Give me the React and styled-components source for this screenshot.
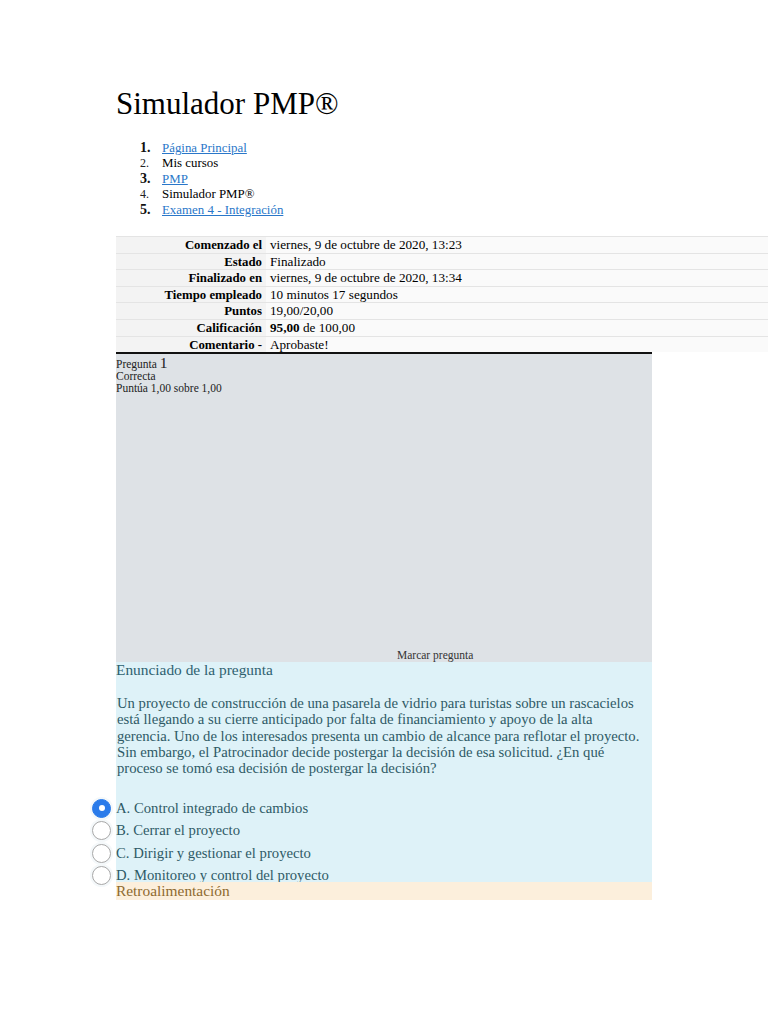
import React from "react"
import styled, { createGlobalStyle } from "styled-components"

const GlobalStyle = createGlobalStyle`
  body {
    margin: 0;
    background: #ffffff;
    font-family: "Liberation Serif", "Times New Roman", serif;
    color: #000;
  }
`;

const Page = styled.div`
  padding: 84px 0 120px 116px;
`;
const Title = styled.h1`
  margin: 0;
  font-size: 31px;
  font-weight: normal;
  line-height: 40px;
`;
const Crumbs = styled.ol`
  list-style: none;
  margin: 16px 0 0 0;
  padding: 0 0 0 24px;
`;
const Crumb = styled.li`
  display: flex;
  align-items: baseline;
  height: 15.6px;
  font-size: 12.9px;
  line-height: 15.6px;
`;
const Num = styled.span`
  width: 22px;
  font-size: ${(p) => (p.$big ? "14px" : "12px")};
  font-weight: ${(p) => (p.$big ? "bold" : "normal")};
  color: ${(p) => (p.$big ? "#111" : "#222")};
`;
const Link = styled.a`
  color: #2a77c9;
  text-decoration: underline;
`;
const Summary = styled.div`
  margin-top: 18px;
  display: grid;
  grid-template-columns: 150px 1fr;
  font-size: 13.2px;
`;
const Label = styled.div`
  background: #f3f3f3;
  border-top: 1px solid #e4e4e4;
  height: 15.6px;
  line-height: 16px;
  padding-right: 4px;
  text-align: right;
  font-weight: bold;
  font-size: 12.8px;
`;
const Value = styled.div`
  background: #fafafa;
  border-top: 1px solid #e4e4e4;
  height: 15.6px;
  line-height: 16px;
  padding-left: 4px;
`;
const Question = styled.div`
  width: 536px;
  border-top: 2px solid #111;
`;
const Info = styled.div`
  height: 308px;
  background: #dee2e6;
  font-size: 11.5px;
  line-height: 12px;
  color: #222;
  display: flex;
  flex-direction: column;
  padding-top: 3px;
  box-sizing: border-box;
`;
const QNum = styled.span`
  font-size: 15.5px;
`;
const Flag = styled.div`
  margin-top: auto;
  margin-left: 281px;
  padding-bottom: 1px;
  color: #333;
`;
const Formulation = styled.div`
  background: #def2f8;
  color: #2e5a66;
`;
const Heading = styled.div`
  font-size: 15.4px;
  line-height: 16px;
  color: #2e6170;
`;
const Text = styled.p`
  margin: 17px 0 0 1px;
  font-size: 14.7px;
  line-height: 16.2px;
`;
const Options = styled.div`
  margin-top: 21px;
  margin-bottom: -5px;
`;
const Option = styled.div`
  display: flex;
  align-items: center;
  height: 22.5px;
  font-size: 14.7px;
`;
const Radio = styled.span`
  width: 19px;
  height: 19px;
  margin-left: -24px;
  margin-right: 5px;
  border-radius: 50%;
  box-sizing: border-box;
  display: inline-flex;
  align-items: center;
  justify-content: center;
  background: ${(p) => (p.$on ? "#2a7bea" : "#ffffff")};
  border: ${(p) => (p.$on ? "1px solid #2a7bea" : "1.5px solid #a8a8a8")};
  box-shadow: 0 0 0 2px #f4f8fa;
  &::after {
    content: "";
    display: ${(p) => (p.$on ? "block" : "none")};
    width: 6px;
    height: 6px;
    border-radius: 50%;
    background: #ffffff;
  }
`;
const Feedback = styled.div`
  position: relative;
  background: #fcefdc;
  color: #8e6a2f;
  font-size: 15.4px;
  line-height: 18px;
  height: 18px;
`;

const crumbs = [
  { text: "Página Principal", link: true },
  { text: "Mis cursos" },
  { text: "PMP", link: true },
  { text: "Simulador PMP®" },
  { text: "Examen 4 - Integración", link: true },
];

const rows = [
  ["Comenzado el", "viernes, 9 de octubre de 2020, 13:23"],
  ["Estado", "Finalizado"],
  ["Finalizado en", "viernes, 9 de octubre de 2020, 13:34"],
  ["Tiempo empleado", "10 minutos 17 segundos"],
  ["Puntos", "19,00/20,00"],
  ["Calificación", <><b>95,00</b> de 100,00</>],
  ["Comentario -", "Aprobaste!"],
];

const options = [
  "A. Control integrado de cambios",
  "B. Cerrar el proyecto",
  "C. Dirigir y gestionar el proyecto",
  "D. Monitoreo y control del proyecto",
];

const App = () => {
  return (
    <Page>
      <GlobalStyle />
      <Title>Simulador PMP®</Title>
      <Crumbs>
        {crumbs.map((c, i) => (
          <Crumb key={i}>
            <Num $big={c.link}>{i + 1}.</Num>
            {c.link ? <Link href="#">{c.text}</Link> : <span>{c.text}</span>}
          </Crumb>
        ))}
      </Crumbs>
      <Summary>
        {rows.map((r, i) => (
          <React.Fragment key={i}>
            <Label>{r[0]}</Label>
            <Value>{r[1]}</Value>
          </React.Fragment>
        ))}
      </Summary>
      <Question>
        <Info>
          <div>Pregunta <QNum>1</QNum></div>
          <div>Correcta</div>
          <div>Puntúa 1,00 sobre 1,00</div>
          <Flag>Marcar pregunta</Flag>
        </Info>
        <Formulation>
          <Heading>Enunciado de la pregunta</Heading>
          <Text>
            Un proyecto de construcción de una pasarela de vidrio para turistas sobre un rascacielos<br />
            está llegando a su cierre anticipado por falta de financiamiento y apoyo de la alta<br />
            gerencia. Uno de los interesados presenta un cambio de alcance para reflotar el proyecto.<br />
            Sin embargo, el Patrocinador decide postergar la decisión de esa solicitud. ¿En qué<br />
            proceso se tomó esa decisión de postergar la decisión?
          </Text>
          <Options>
            {options.map((o, i) => (
              <Option key={i}>
                <Radio $on={i === 0} />
                {o}
              </Option>
            ))}
          </Options>
        </Formulation>
        <Feedback>Retroalimentación</Feedback>
      </Question>
    </Page>
  );
};

export default App;
